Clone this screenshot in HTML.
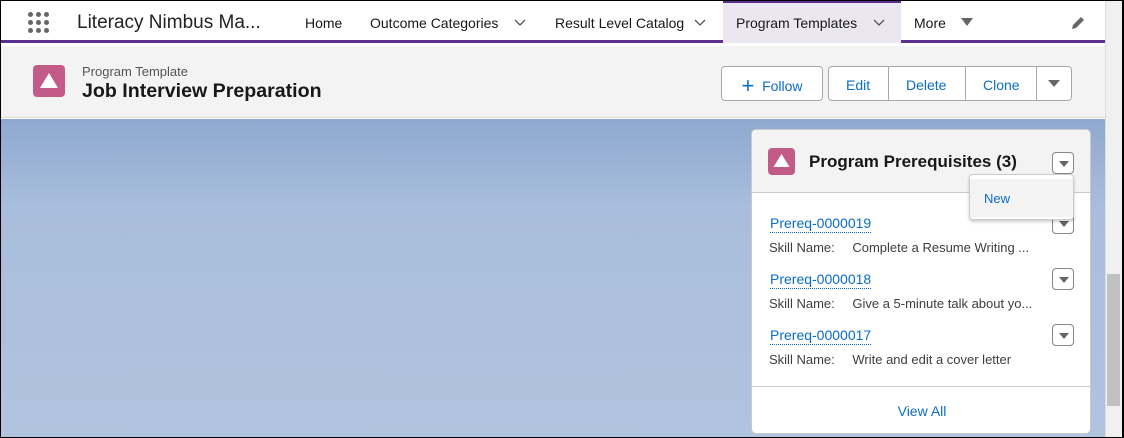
<!DOCTYPE html>
<html><head><style>
*{box-sizing:border-box;margin:0;padding:0}
body{width:1124px;height:438px;overflow:hidden;font-family:"Liberation Sans",sans-serif;background:#000;position:relative}
.frame{position:absolute;left:1px;top:1px;width:1121px;height:436px;background:#fff;overflow:hidden}
.nav{position:absolute;left:0;top:0;width:1104px;height:42px;background:#fff;border-bottom:3px solid #5a2f8e}
.nav span{position:absolute;top:14px;font-size:14px;color:#181818}
.dots{position:absolute;left:27px;top:11px;width:26px;height:22px}
.dots i{position:absolute;width:5px;height:5px;border-radius:50%;background:#666}
.active{position:absolute;left:722px;top:0;width:178px;height:42px;background:#ebe7f1;border-top:2px solid #5a2f8e}
.chev{position:absolute;top:15px;width:12px;height:12px}
.hdr{position:absolute;left:0;top:45px;width:1104px;height:72px;background:#f3f3f3;border-bottom:1px solid #ddd}
.icon{position:absolute;width:32px;height:32px;background:#c25b88;border-radius:4px}
.btn{position:absolute;top:20px;height:35px;border:1px solid #a8a8a8;background:#fff;border-radius:4px;color:#0b6dc8;font-size:14px;line-height:33px;text-align:center}
.bg{position:absolute;left:0;top:118px;width:1104px;height:320px;background:linear-gradient(#8ea8cf 0px,#a9bedc 90px,#b0c3df 320px)}
.sb{position:absolute;left:1104px;top:0;width:17px;height:438px;background:#f0f0f0;border-left:1px solid #ddd}
.thumb{position:absolute;left:1106px;top:273px;width:13px;height:132px;background:#c1c1c1}
.card{position:absolute;left:750px;top:128px;width:340px;height:305px;background:#fff;border:1px solid #c9c9c9;border-radius:5px;overflow:hidden}
.ch{position:absolute;left:0;top:0;width:340px;height:63px;background:#f3f3f3;border-bottom:1px solid #ccc}
.dd{position:absolute;width:22px;height:22px;border:1px solid #888;border-radius:4px;background:#fff}
.dd:after{content:"";position:absolute;left:6px;top:8px;border-left:5px solid transparent;border-right:5px solid transparent;border-top:6px solid #666}
.lnk{position:absolute;left:18px;font-size:14px;color:#0b6dc8;border-bottom:1px dotted #0b6dc8;line-height:17px}
.sk{position:absolute;left:17px;font-size:13px;color:#3e3e3e;white-space:nowrap}
.sk b{font-weight:normal;margin-right:14px}
</style></head><body><div class="frame">
<div class="nav">
<div class="dots"><i style="left:0;top:0"></i><i style="left:8px;top:0"></i><i style="left:16px;top:0"></i><i style="left:0;top:8px"></i><i style="left:8px;top:8px"></i><i style="left:16px;top:8px"></i><i style="left:0;top:16px"></i><i style="left:8px;top:16px"></i><i style="left:16px;top:16px"></i></div>
<span style="left:76px;top:11px;font-size:19px;color:#222">Literacy Nimbus Ma...</span>
<span style="left:304px">Home</span>
<span style="left:369px">Outcome Categories</span>
<svg class="chev" style="left:513px" viewBox="0 0 12 12"><path d="M1 4l5 5 5-5" fill="none" stroke="#555" stroke-width="1.3"/></svg>
<span style="left:554px">Result Level Catalog</span>
<svg class="chev" style="left:693px" viewBox="0 0 12 12"><path d="M1 4l5 5 5-5" fill="none" stroke="#555" stroke-width="1.3"/></svg>
<div class="active"></div>
<span style="left:735px">Program Templates</span>
<svg class="chev" style="left:872px" viewBox="0 0 12 12"><path d="M1 4l5 5 5-5" fill="none" stroke="#555" stroke-width="1.3"/></svg>
<span style="left:913px">More</span>
<svg class="chev" style="left:960px;top:16px" viewBox="0 0 12 12"><path d="M0 1h12L6 9z" fill="#666"/></svg>
<svg style="position:absolute;left:1069px;top:14px" width="16" height="16" viewBox="0 0 16 16"><path d="M2 14l1-4 8-8 3 3-8 8z" fill="#666"/></svg>
</div>
<div class="hdr">
<div class="icon" style="left:32px;top:19px"><svg width="32" height="32" viewBox="0 0 32 32"><path d="M16 8l9 15H7z" fill="#fff"/></svg></div>
<div style="position:absolute;left:81px;top:18px;font-size:13px;color:#555">Program Template</div>
<div style="position:absolute;left:81px;top:34px;font-size:19.6px;font-weight:bold;color:#181818">Job Interview Preparation</div>
<div class="btn" style="left:720px;width:102px"><span style="font-size:22px;position:relative;top:2px">+</span>&nbsp; Follow</div>
<div class="btn" style="left:827px;width:244px;border-radius:4px"></div>
<div style="position:absolute;left:887px;top:21px;width:1px;height:33px;background:#a8a8a8"></div>
<div style="position:absolute;left:964px;top:21px;width:1px;height:33px;background:#a8a8a8"></div>
<div style="position:absolute;left:1035px;top:21px;width:1px;height:33px;background:#a8a8a8"></div>
<span style="position:absolute;left:845px;top:31px;font-size:14px;color:#0b6dc8">Edit</span>
<span style="position:absolute;left:905px;top:31px;font-size:14px;color:#0b6dc8">Delete</span>
<span style="position:absolute;left:982px;top:31px;font-size:14px;color:#0b6dc8">Clone</span>
<svg style="position:absolute;left:1047px;top:34px" width="12" height="8" viewBox="0 0 12 8"><path d="M0 0h12L6 7z" fill="#666"/></svg>
</div>
<div class="bg"></div>
<div class="card">
<div class="ch">
<div class="icon" style="left:16px;top:18px;width:27px;height:27px"><svg width="27" height="27" viewBox="0 0 27 27"><path d="M13.5 6l8 13h-16z" fill="#fff"/></svg></div>
<div style="position:absolute;left:57px;top:22px;font-size:17px;font-weight:bold;color:#181818">Program Prerequisites (3)</div>
</div>
<div class="dd" style="left:300px;top:22px"></div>
<div class="dd" style="left:300px;top:82px"></div>
<div class="dd" style="left:300px;top:138px"></div>
<div class="dd" style="left:300px;top:194px"></div>
<div class="lnk" style="top:85px">Prereq-0000019</div>
<div class="sk" style="top:110px"><b>Skill Name:</b> Complete a Resume Writing ...</div>
<div class="lnk" style="top:141px">Prereq-0000018</div>
<div class="sk" style="top:166px"><b>Skill Name:</b> Give a 5-minute talk about yo...</div>
<div class="lnk" style="top:197px">Prereq-0000017</div>
<div class="sk" style="top:222px"><b>Skill Name:</b> Write and edit a cover letter</div>
<div style="position:absolute;left:0;top:256px;width:340px;height:1px;background:#ccc"></div>
<div style="position:absolute;left:0;top:273px;width:340px;text-align:center;font-size:14px;color:#0b6dc8">View All</div>
<div style="position:absolute;left:217px;top:44px;width:105px;height:46px;background:#fff;border:1px solid #ccc;border-radius:4px;box-shadow:0 2px 3px rgba(0,0,0,.2)"><div style="position:absolute;left:0;top:4px;width:103px;height:38px;background:#f3f3f3"></div><span style="position:absolute;left:14px;top:16px;font-size:13px;color:#0b6dc8">New</span></div>
</div>
<div class="sb"></div><div class="thumb"></div>
</div></body></html>
